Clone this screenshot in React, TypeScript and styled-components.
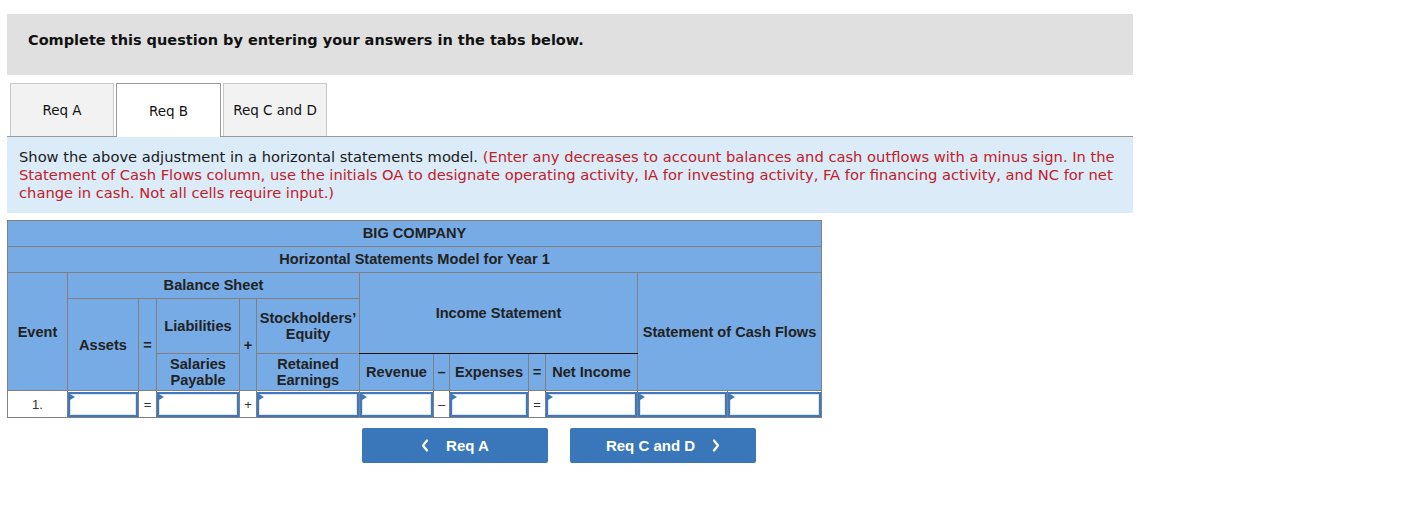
import React from "react";
import styled, { createGlobalStyle, css } from "styled-components";

const GlobalStyle = createGlobalStyle`
  html, body { margin: 0; padding: 0; background: #ffffff; }
  body { font-family: "DejaVu Sans", Verdana, sans-serif; }
`;

const Page = styled.div`
  padding: 14px 0 0 7px;
  width: 1126px;
`;

const Banner = styled.div`
  height: 61px;
  box-sizing: border-box;
  background: #e0e0e0;
  display: flex;
  align-items: center;
  padding: 0 0 10px 21px;
  font-family: "DejaVu Sans", Verdana, sans-serif;
  font-weight: bold;
  font-size: 14.5px;
  color: #111;
`;

const TabBar = styled.div`
  display: flex;
  gap: 2px;
  margin-top: 8px;
  padding-left: 3px;
  border-bottom: 1px solid #999;
  height: 53px;
`;

const Tab = styled.div<{ $active?: boolean }>`
  width: 104px;
  height: 53px;
  box-sizing: border-box;
  display: flex;
  align-items: center;
  justify-content: center;
  font-family: "DejaVu Sans", Verdana, sans-serif;
  font-size: 13.5px;
  color: #111;
  border: 1px solid #c8c8c8;
  border-bottom: none;
  background: #f2f2f2;
  ${(p) =>
    p.$active &&
    css`
      width: 105px;
      background: #ffffff;
      border-color: #999;
      height: 54px;
      position: relative;
      z-index: 1;
    `}
`;

const Instructions = styled.div`
  background: #dbebf8;
  padding: 11px 12px 11px 12px;
  font-family: "DejaVu Sans", Verdana, sans-serif;
  font-size: 14.7px;
  line-height: 18px;
  color: #1a1a1a;
  white-space: nowrap;
`;

const Red = styled.span`
  color: #c0202a;
`;

const Table = styled.table`
  margin-top: 7px;
  border-collapse: collapse;
  table-layout: fixed;
  width: 815px;
  font-family: "Liberation Sans", Arial, sans-serif;
  font-size: 14.6px;
  color: #222;
`;

const HeadCell = styled.th<{ $blackBottom?: boolean; $title?: boolean }>`
  background: #77abe5;
  border: 1px solid #808080;
  font-weight: bold;
  text-align: center;
  vertical-align: middle;
  padding: 0 1px;
  line-height: 16px;
  ${(p) =>
    p.$title &&
    css`
      padding-bottom: 2px;
    `}
  ${(p) =>
    p.$blackBottom &&
    css`
      border-bottom: 1px solid #111;
    `}
`;

const Row = styled.tr<{ $h: number }>`
  height: ${(p) => p.$h}px;
`;

const DataCell = styled.td`
  background: #ffffff;
  border: 1px solid #808080;
  text-align: center;
  vertical-align: middle;
  padding: 0;
  font-size: 13px;
  color: #333;
`;

const InputCell = styled.td`
  background: #ffffff;
  border: 1px solid #808080;
  padding: 0;
  vertical-align: middle;
`;

const InputBox = styled.div`
  position: relative;
  height: 25px;
  box-sizing: border-box;
  border: 2px solid #4078bf;
  box-shadow: inset 0 0 0 1px #dbe7f5;
  background: #ffffff;
  &::before {
    content: "";
    position: absolute;
    left: 0;
    top: 0;
    width: 0;
    height: 0;
    border-top: 3px solid transparent;
    border-bottom: 3px solid transparent;
    border-left: 5px solid #3d78c0;
  }
`;

const ButtonRow = styled.div`
  display: flex;
  gap: 22px;
  margin-top: 10px;
  padding-left: 355px;
`;

const NavButton = styled.div`
  width: 186px;
  height: 35px;
  background: #3a77ba;
  border-radius: 2px;
  display: flex;
  align-items: center;
  justify-content: center;
  gap: 17px;
  color: #ffffff;
  font-family: "Liberation Sans", Arial, sans-serif;
  font-weight: bold;
  font-size: 15px;
`;

const Chevron = ({ dir }: { dir: "left" | "right" }) => (
  <svg width="8" height="13" viewBox="0 0 8 13">
    <path
      d={dir === "left" ? "M6 1.5 L2 6.5 L6 11.5" : "M2 1.5 L6 6.5 L2 11.5"}
      fill="none"
      stroke="#ffffff"
      strokeWidth="2.2"
      strokeLinecap="round"
      strokeLinejoin="round"
    />
  </svg>
);

const colWidths = [60, 71, 18, 83, 17, 103, 74, 16, 79, 17, 92, 90, 94];

const Input = () => (
  <InputCell>
    <InputBox />
  </InputCell>
);

export default function App() {
  return (
    <>
      <GlobalStyle />
      <Page>
        <Banner>Complete this question by entering your answers in the tabs below.</Banner>
        <TabBar>
          <Tab>Req A</Tab>
          <Tab $active>Req B</Tab>
          <Tab>Req C and D</Tab>
        </TabBar>
        <Instructions>
          Show the above adjustment in a horizontal statements model.{" "}
          <Red>
            (Enter any decreases to account balances and cash outflows with a minus sign. In the
            <br />
            Statement of Cash Flows column, use the initials OA to designate operating activity, IA for investing activity, FA for financing activity, and NC for net
            <br />
            change in cash. Not all cells require input.)
          </Red>
        </Instructions>
        <Table>
          <colgroup>
            {colWidths.map((w, i) => (
              <col key={i} style={{ width: w }} />
            ))}
          </colgroup>
          <thead>
            <Row $h={26}>
              <HeadCell colSpan={13} $title>
                BIG COMPANY
              </HeadCell>
            </Row>
            <Row $h={26}>
              <HeadCell colSpan={13} $title>
                Horizontal Statements Model for Year 1
              </HeadCell>
            </Row>
            <Row $h={26}>
              <HeadCell rowSpan={3}>Event</HeadCell>
              <HeadCell colSpan={5} $title>
                Balance Sheet
              </HeadCell>
              <HeadCell colSpan={5} rowSpan={2} $blackBottom>
                Income Statement
              </HeadCell>
              <HeadCell colSpan={2} rowSpan={3}>
                Statement of Cash Flows
              </HeadCell>
            </Row>
            <Row $h={55}>
              <HeadCell rowSpan={2}>Assets</HeadCell>
              <HeadCell rowSpan={2}>=</HeadCell>
              <HeadCell>Liabilities</HeadCell>
              <HeadCell rowSpan={2}>+</HeadCell>
              <HeadCell>
                Stockholders’
                <br />
                Equity
              </HeadCell>
            </Row>
            <Row $h={37}>
              <HeadCell>
                Salaries
                <br />
                Payable
              </HeadCell>
              <HeadCell>
                Retained
                <br />
                Earnings
              </HeadCell>
              <HeadCell>Revenue</HeadCell>
              <HeadCell>–</HeadCell>
              <HeadCell>Expenses</HeadCell>
              <HeadCell>=</HeadCell>
              <HeadCell>Net Income</HeadCell>
            </Row>
          </thead>
          <tbody>
            <Row $h={27}>
              <DataCell>1.</DataCell>
              <Input />
              <DataCell>=</DataCell>
              <Input />
              <DataCell>+</DataCell>
              <Input />
              <Input />
              <DataCell>–</DataCell>
              <Input />
              <DataCell>=</DataCell>
              <Input />
              <Input />
              <Input />
            </Row>
          </tbody>
        </Table>
        <ButtonRow>
          <NavButton>
            <Chevron dir="left" />
            <span>Req A</span>
          </NavButton>
          <NavButton>
            <span>Req C and D</span>
            <Chevron dir="right" />
          </NavButton>
        </ButtonRow>
      </Page>
    </>
  );
}
